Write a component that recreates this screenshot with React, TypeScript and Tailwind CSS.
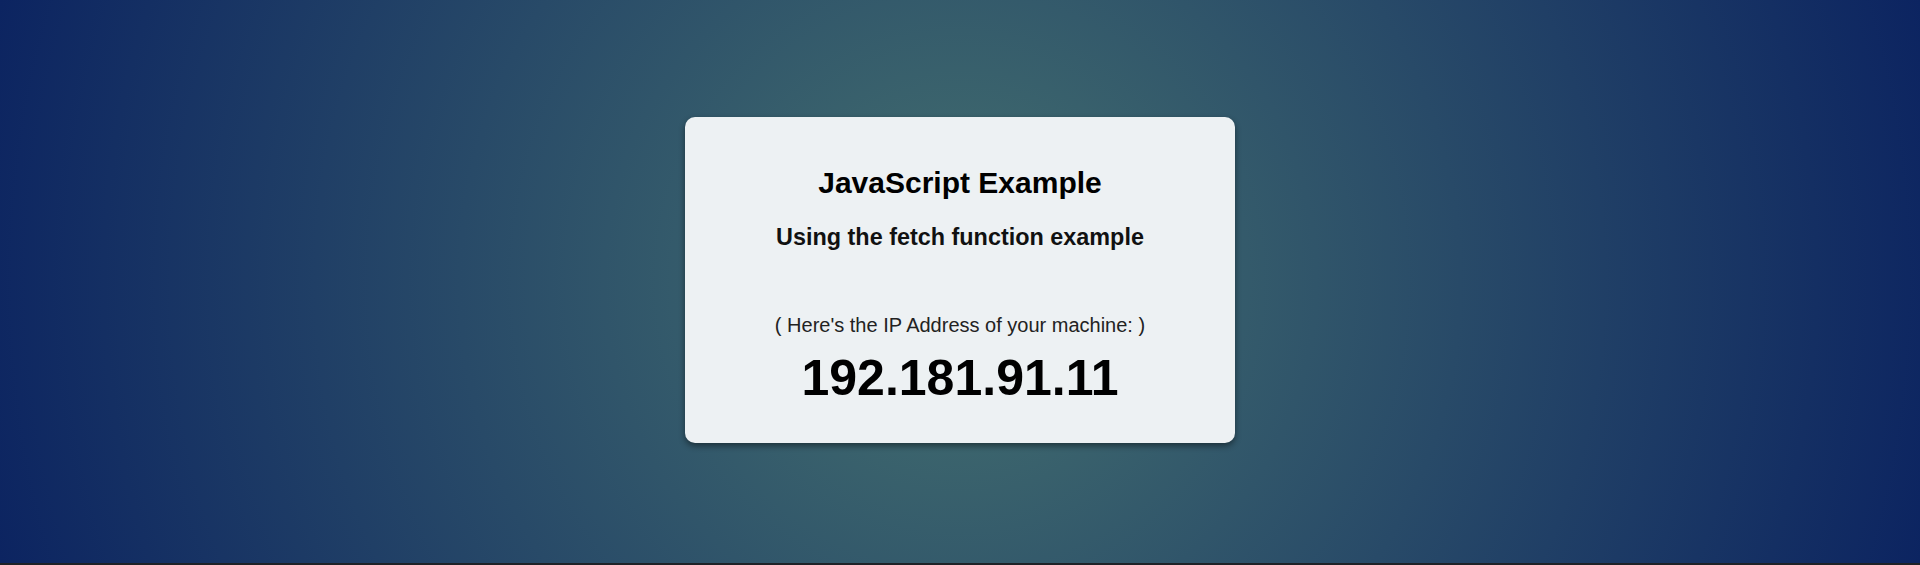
export default function App() {
  const ip = "192.181.91.11";

  return (
    <div className="flex h-[565px] w-full flex-col font-['Liberation_Sans',Arial,sans-serif]">
      <main className="flex flex-1 items-center justify-center bg-[radial-gradient(circle,#44706f_0%,#0c2461_100%)]">
        {/* Card */}
        <div className="mb-[3px] flex w-[550px] flex-col items-center rounded-[10px] bg-[#edf1f3] pt-[49px] pb-[36px] text-center shadow-[0_3px_6px_rgba(0,0,0,0.45)]">
          <h1 className="text-[30px] leading-[1.15] font-bold text-black">JavaScript Example</h1>
          <h2 className="mt-[24px] text-[23.4px] leading-[1.15] font-bold text-[#111]">Using the fetch function example</h2>
          <p className="mt-[63px] text-[20px] leading-[1.15] text-[#222]">( Here's the IP Address of your machine: )</p>
          <p className="mt-[13px] text-[50px] leading-[1.15] font-bold text-black">{ip}</p>
        </div>
      </main>
      <div className="h-[2px] bg-[#1e2227]" />
    </div>
  );
}
